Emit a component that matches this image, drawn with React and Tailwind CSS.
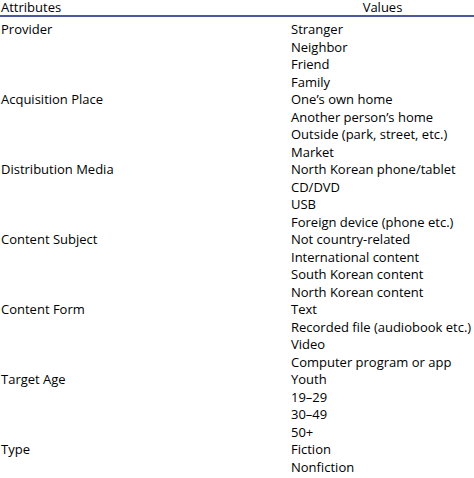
import React from "react";

const rows = [
  { attr: "Provider", values: ["Stranger", "Neighbor", "Friend", "Family"] },
  {
    attr: "Acquisition Place",
    values: ["One’s own home", "Another person’s home", "Outside (park, street, etc.)", "Market"],
  },
  {
    attr: "Distribution Media",
    values: ["North Korean phone/tablet", "CD/DVD", "USB", "Foreign device (phone etc.)"],
  },
  {
    attr: "Content Subject",
    values: ["Not country-related", "International content", "South Korean content", "North Korean content"],
  },
  {
    attr: "Content Form",
    values: ["Text", "Recorded file (audiobook etc.)", "Video", "Computer program or app"],
  },
  { attr: "Target Age", values: ["Youth", "19–29", "30–49", "50+"] },
  { attr: "Type", values: ["Fiction", "Nonfiction"] },
];

export default function App() {
  return (
    <div
      className="w-[474px] h-[478px] overflow-hidden bg-white text-black text-[13px]"
      style={{ fontFamily: '"Open Sans", "Liberation Sans", sans-serif' }}
    >
      {/* Header */}
      <div className="flex h-[15px] leading-[15px]">
        <div className="w-[291px] pl-[1px]">Attributes</div>
        <div className="flex-1 text-center">Values</div>
      </div>
      <div className="h-[2px] bg-[#4a58a4]" />

      {/* Body */}
      <div className="pt-[4px] leading-[17.5px]">
        {rows.map((row) => (
          <div key={row.attr} className="flex">
            <div className="w-[291px] pl-[1px]">{row.attr}</div>
            <div className="flex-1 flex flex-col whitespace-nowrap">
              {row.values.map((v) => (
                <span key={v}>{v}</span>
              ))}
            </div>
          </div>
        ))}
      </div>
    </div>
  );
}
